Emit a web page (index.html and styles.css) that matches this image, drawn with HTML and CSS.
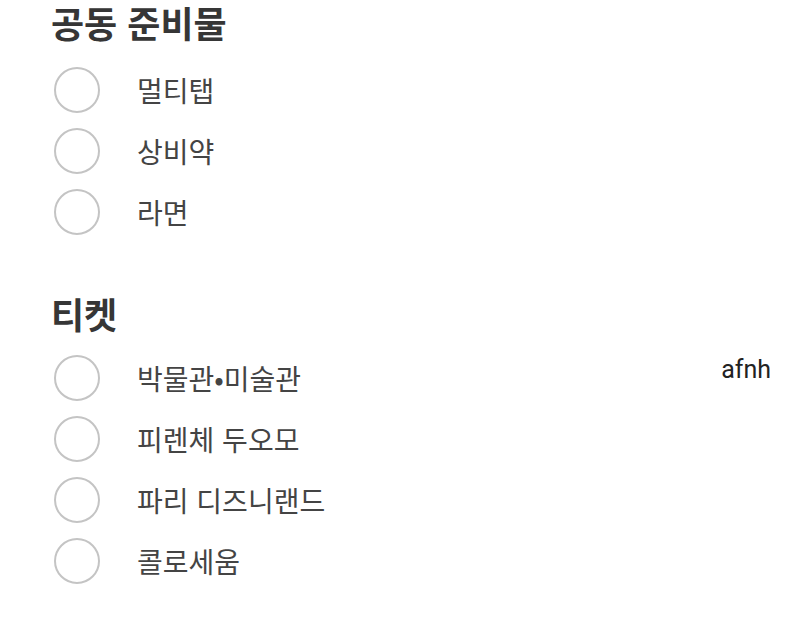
FILE: index.html
```html
<!DOCTYPE html>
<html lang="ko">
<head>
<meta charset="utf-8">
<link rel="stylesheet" href="styles.css">
</head>
<body>
<div class="page">
  <section class="group">
    <h2 class="title">공동 준비물</h2>
    <ul class="list">
      <li class="item"><span class="radio"></span><span class="label">멀티탭</span></li>
      <li class="item"><span class="radio"></span><span class="label">상비약</span></li>
      <li class="item"><span class="radio"></span><span class="label">라면</span></li>
    </ul>
  </section>
  <section class="group second">
    <h2 class="title">티켓</h2>
    <ul class="list">
      <li class="item"><span class="radio"></span><span class="label">박물관•미술관</span><span class="note">afnh</span></li>
      <li class="item"><span class="radio"></span><span class="label">피렌체 두오모</span></li>
      <li class="item"><span class="radio"></span><span class="label">파리 디즈니랜드</span></li>
      <li class="item"><span class="radio"></span><span class="label">콜로세움</span></li>
    </ul>
  </section>
</div>
</body>
</html>
```
FILE: styles.css
```css
html, body {
  margin: 0;
  padding: 0;
  background: #ffffff;
}
.page {
  padding: 2px 29px 0 51px;
  font-family: "Noto Sans CJK KR", "Noto Sans", sans-serif;
}
.group.second {
  margin-top: 50px;
}
.title {
  margin: 0;
  height: 40px;
  line-height: 40px;
  font-size: 36px;
  font-weight: 700;
  color: #363636;
}
.group.second .list {
  margin-top: 14px;
}
.list {
  list-style: none;
  margin: 17px 0 0 0;
  padding: 0;
}
.item {
  display: flex;
  align-items: center;
  height: 61.3px;
}
.radio {
  box-sizing: border-box;
  width: 46px;
  height: 46px;
  margin-left: 3px;
  border: 2.5px solid #c4c4c4;
  border-radius: 50%;
  flex: none;
}
.label {
  margin-left: 37px;
  font-size: 28px;
  color: #444444;
}
.note {
  margin-left: auto;
  font-family: Roboto, "Liberation Sans", sans-serif;
  font-size: 25px;
  color: #222222;
  position: relative;
  top: -8px;
}
```
